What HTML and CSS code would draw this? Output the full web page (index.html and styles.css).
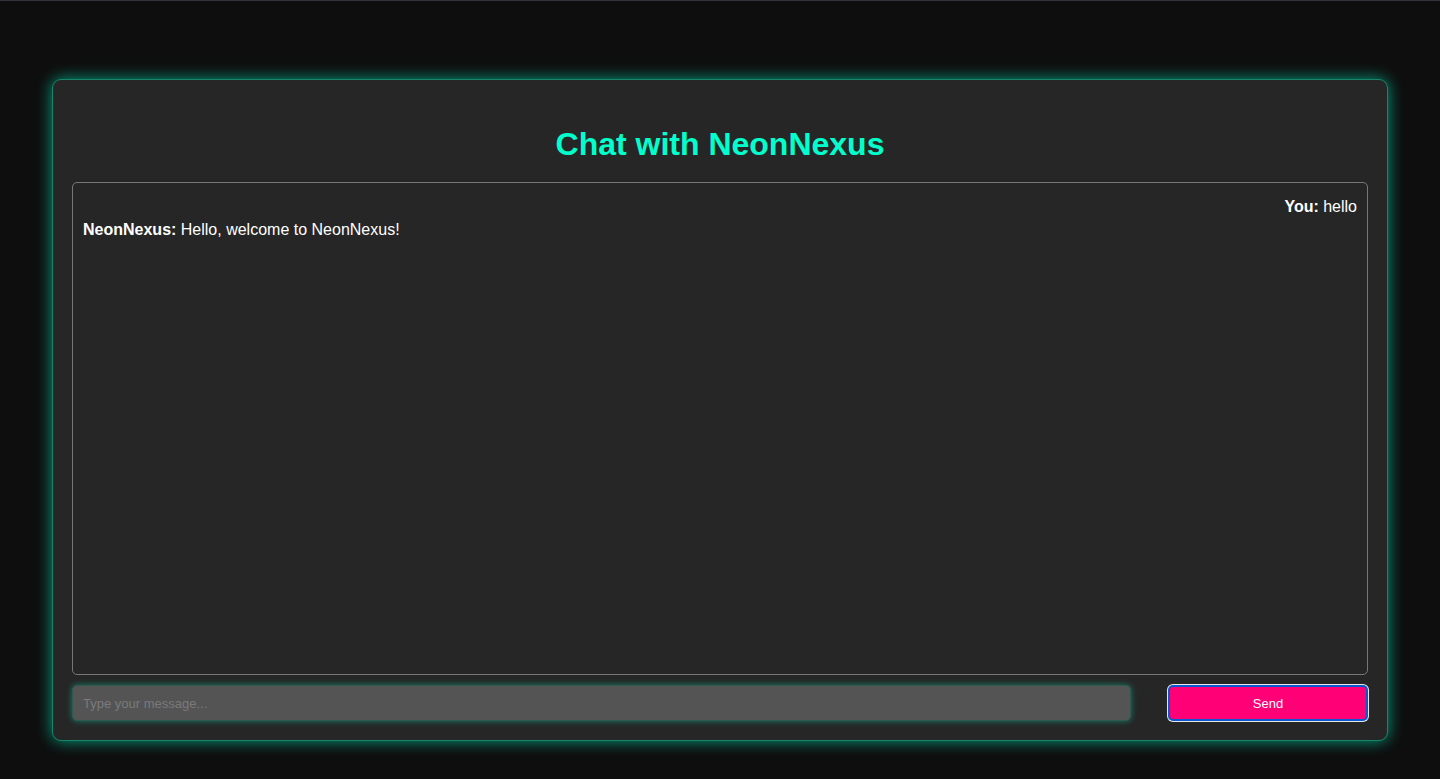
FILE: index.html
```html
<!DOCTYPE html>
<html lang="en">
<head>
    <meta charset="UTF-8">
    <meta name="viewport" content="width=device-width, initial-scale=1.0">
    <title>Chat with NeonNexus</title>
    <link rel="stylesheet" href="styles.css">
</head>
<body>
    <div class="chat-container">
        <h1>Chat with NeonNexus</h1>

        <div id="chatBox" class="chat-box">
            <div class="message user"><strong>You:</strong> hello</div>
            <div class="message bot"><strong>NeonNexus:</strong> Hello, welcome to NeonNexus!</div>
        </div>

        <form id="chatForm" class="chat-form">
            <input type="text" id="messageInput" class="message-input" placeholder="Type your message...">
            <button type="submit" id="sendButton" class="send-btn">Send</button>
        </form>
    </div>
</body>
</html>
```

FILE: styles.css
```css
body {
    font-family: "Liberation Sans", Arial, sans-serif;
    background-color: #0e0e0e;
    color: #ffffff;
    margin: 0;
    padding: 79px 52px 0;
    border-top: 1px solid #34323f;
    box-sizing: border-box;
    height: 100vh;
}
.chat-container {
    background-color: #262626;
    border: 1px solid #13876b;
    border-radius: 9px;
    box-shadow: 0 0 16px rgba(0, 255, 204, 0.6);
    padding: 19px;
    height: 662px;
    margin-top: -1px;
    box-sizing: border-box;
    display: flex;
    flex-direction: column;
}
h1 {
    color: #00ffcc;
    font-size: 32px;
    text-align: center;
    margin: 27px 0 19px;
}
.chat-box {
    flex: 1;
    border: 1px solid #777777;
    border-radius: 5px;
    padding: 10px 10px 5px;
    overflow-y: auto;
    font-size: 16px;
}
.message {
    margin: 5px 0;
}
.message.user {
    text-align: right;
}
.chat-form {
    display: flex;
    gap: 37px;
    margin-top: 10px;
    height: 36px;
}
.message-input {
    flex: 1;
    background-color: #545454;
    border: 1px solid #2c5a4e;
    border-radius: 5px;
    box-shadow: 0 0 6px rgba(0, 255, 204, 0.4);
    color: #ffffff;
    padding: 0 10px;
    font-family: "Liberation Sans", Arial, sans-serif;
    font-size: 13px;
    outline: none;
}
.message-input::placeholder {
    color: #7a7a7a;
}
.send-btn {
    width: 200px;
    background-color: #ff0077;
    color: #ffffff;
    border: 2px solid #0b57d0;
    border-radius: 5px;
    box-shadow: 0 0 0 1px #e8e8e8;
    font-family: "Liberation Sans", Arial, sans-serif;
    font-size: 13px;
    cursor: pointer;
}
```
